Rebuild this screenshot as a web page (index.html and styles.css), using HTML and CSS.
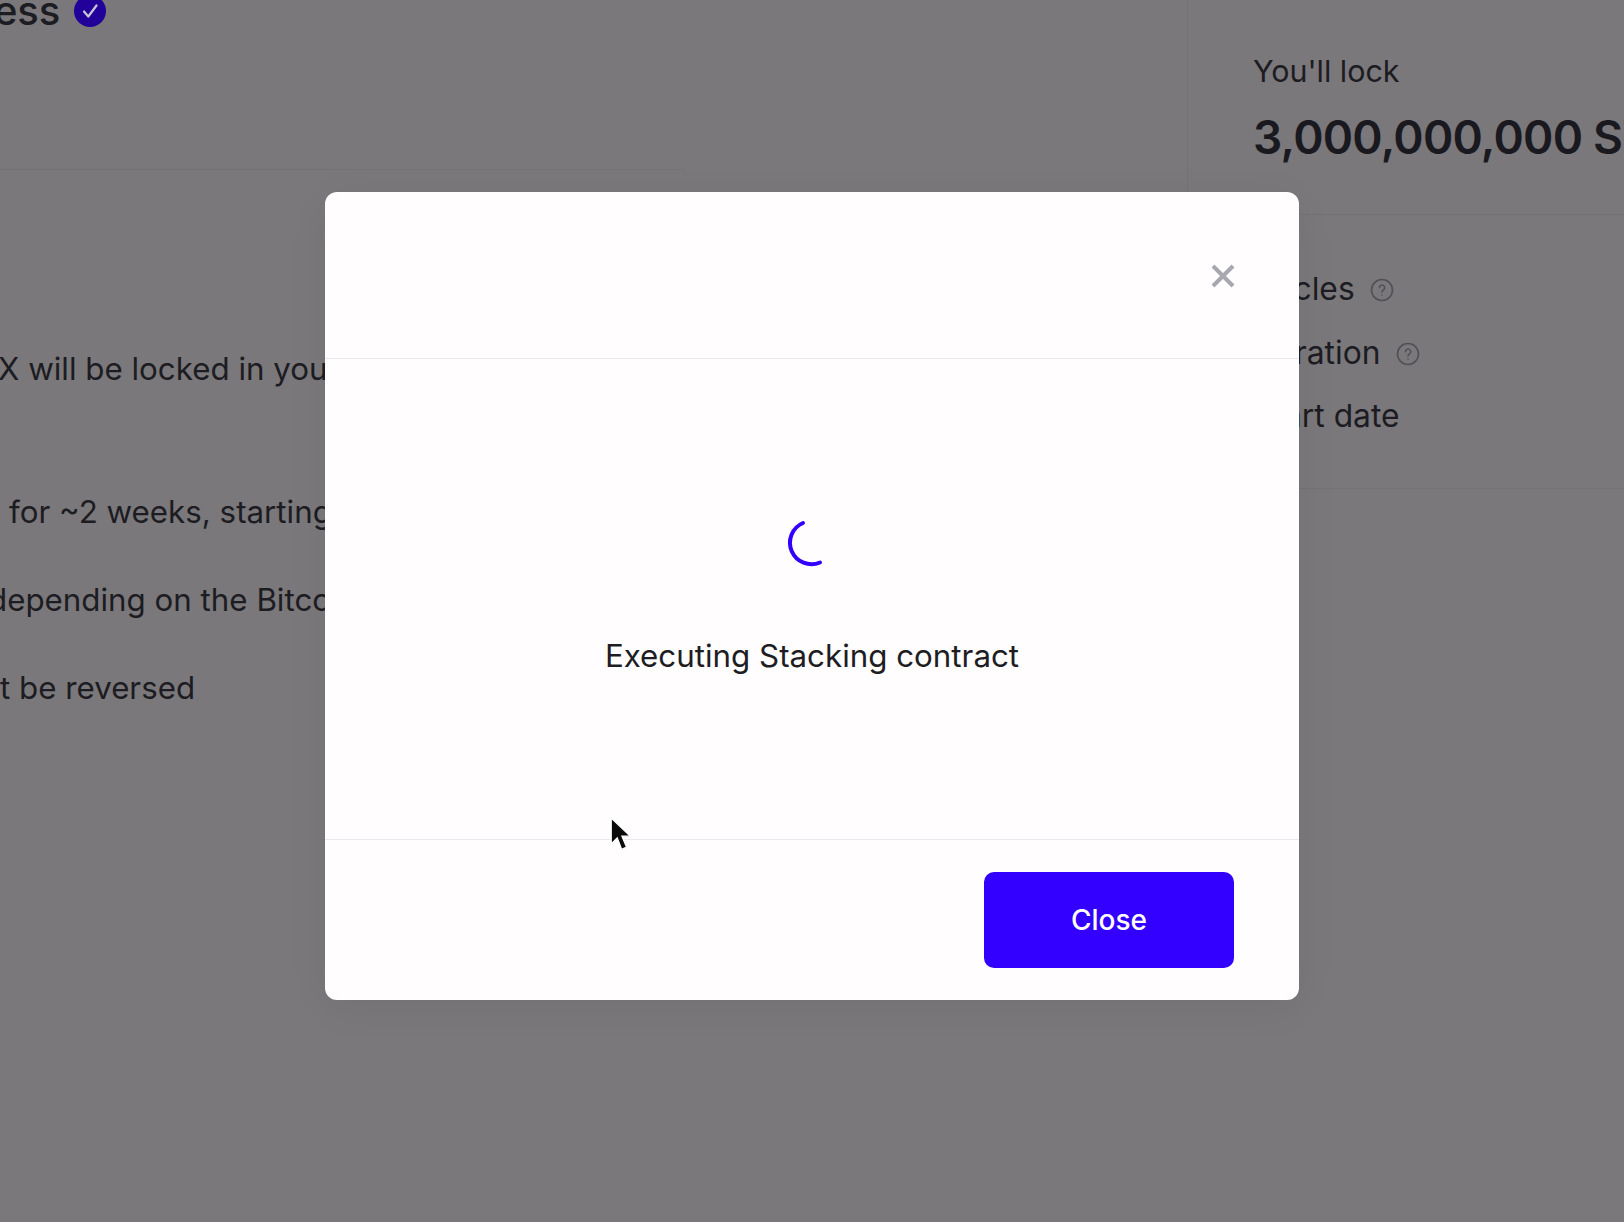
FILE: index.html
```html
<!DOCTYPE html>
<html lang="en">
<head>
<meta charset="utf-8">
<title>Executing Stacking contract</title>
<link rel="stylesheet" href="styles.css">
</head>
<body>
<div class="page">
  <main class="left">
    <div class="heading">
      <h1 class="title">ess</h1>
      <svg class="verified" viewBox="0 0 32 32" aria-hidden="true"><circle cx="16" cy="16" r="16" fill="#22009a"/><path d="M10 16.500l4.300 5L22.500 10.500" fill="none" stroke="#c9c7d6" stroke-width="2.200" stroke-linecap="round" stroke-linejoin="round"/></svg>
    </div>
    <ul class="notes">
      <li class="note note-first">X will be locked in your wallet</li>
      <li class="note note-second">for ~2 weeks, starting soon</li>
      <li class="note note-third">depending on the Bitcoin</li>
      <li class="note">t be reversed</li>
    </ul>
  </main>
  <aside class="right">
    <section class="lock">
      <div class="lock-label">You'll lock</div>
      <div class="lock-value">3,000,000,000 STX</div>
    </section>
    <section class="facts">
      <div class="fact">Cycles <svg class="help" viewBox="0 0 24 24" aria-hidden="true"><circle cx="12" cy="12" r="10.500"/><path d="M9.500 9.600a2.600 2.600 0 1 1 4 2.200c-.9.600-1.500 1.100-1.500 2.200"/><circle class="dot" cx="12" cy="17" r="0.800"/></svg></div>
      <div class="fact">Duration <svg class="help" viewBox="0 0 24 24" aria-hidden="true"><circle cx="12" cy="12" r="10.500"/><path d="M9.500 9.600a2.600 2.600 0 1 1 4 2.200c-.9.600-1.500 1.100-1.500 2.200"/><circle class="dot" cx="12" cy="17" r="0.800"/></svg></div>
      <div class="fact">Start date</div>
    </section>
  </aside>
  <div class="overlay">
    <div class="modal">
      <header class="modal-head">
        <button class="modal-x" aria-label="Close">
          <svg viewBox="0 0 24 24" aria-hidden="true"><path d="M2 2L22 22M22 2L2 22"/></svg>
        </button>
      </header>
      <div class="modal-body">
        <svg class="spinner" viewBox="0 0 48 48" aria-hidden="true"><path d="M16 4A21.500 21.500 0 1 0 33 43.500"/></svg>
        <p class="status">Executing Stacking contract</p>
      </div>
      <footer class="modal-foot">
        <button class="close-btn">Close</button>
      </footer>
    </div>
    <svg class="cursor" viewBox="0 0 20 32" aria-hidden="true"><path d="M2 1.500V25l5.500-5.500L11.500 30l4.500-2-4.200-10H19.500z"/></svg>
  </div>
</div>
</body>
</html>
```
FILE: styles.css
```css
* { box-sizing: border-box; }
html, body { margin: 0; padding: 0; }
body { font-family: Inter, "Liberation Sans", sans-serif; background: #7a787a; color: #1c1c22; }
.page { position: relative; width: 1624px; height: 1222px; overflow: hidden; display: flex; background: #7a787a; }
.left { width: 1187px; flex: none; }
.heading { display: flex; align-items: center; gap: 14px; padding-bottom: 140px; margin-top: -7px; height: 177px; border-bottom: 1px solid #747274; width: 685px; }
.title { margin: 0 0 0 -6px; font-size: 40px; line-height: 40px; font-weight: 500; letter-spacing: -0.2px; }
.verified { width: 32px; height: 32px; flex: none; }
.notes { list-style: none; margin: 0; padding: 0; }
.note { font-size: 31.300px; line-height: 40px; white-space: nowrap; margin-bottom: 47.500px; }
.note-first { margin-top: 179px; margin-bottom: 103px; margin-left: -2px; }
.note-second { margin-left: 9px; }
.note-third { margin-left: -12px; margin-bottom: 48.500px; }
.right { flex: 1; min-width: 0; }
.lock { height: 215px; padding: 51px 0 0 65px; border-bottom: 1px solid #747274; border-left: 1px solid #747274; white-space: nowrap; }
.lock-label { font-size: 30.400px; line-height: 40px; }
.lock-value { font-size: 46px; line-height: 60px; font-weight: 600; letter-spacing: -0.750px; margin-top: 16px; color: #19191f; }
.facts { height: 274px; padding: 42.500px 0 0 66px; border-bottom: 1px solid #747274; }
.fact { display: flex; align-items: center; gap: 15px; font-size: 31.800px; line-height: 40px; height: 63.500px; white-space: nowrap; }
.help { width: 24px; height: 24px; margin-top: 2px; fill: none; stroke: #505058; stroke-width: 1.600; stroke-linecap: round; }
.help .dot { fill: #505058; stroke: none; }
.overlay { position: absolute; inset: 0; display: flex; justify-content: center; align-items: flex-start; padding-top: 192px; }
.modal { width: 974px; height: 808px; background: #fffdfe; border-radius: 12px; box-shadow: 0 8px 40px rgba(0, 0, 0, 0.06); display: flex; flex-direction: column; }
.modal-head { height: 167px; flex: none; border-bottom: 1px solid #e8e8ee; display: flex; justify-content: flex-end; padding: 72px 64px 0 0; }
.modal-x { width: 24px; height: 24px; padding: 0; border: 0; background: none; }
.modal-x svg { display: block; width: 24px; height: 24px; fill: none; stroke: #a7a7af; stroke-width: 4; overflow: visible; }
.modal-body { flex: 1; display: flex; flex-direction: column; align-items: center; padding-top: 160px; border-bottom: 1px solid #e8e8ee; }
.spinner { display: block; width: 48px; height: 48px; margin-right: 3px; fill: none; stroke: #3300ff; stroke-width: 4; stroke-linecap: round; overflow: visible; }
.status { margin: 69px 0 0; font-size: 31.300px; line-height: 40px; color: #1d1d23; }
.modal-foot { height: 160px; flex: none; display: flex; justify-content: flex-end; padding: 32px 65px 0 0; }
.close-btn { width: 250px; height: 96px; border: 0; border-radius: 10px; background: #3300ff; color: #fff; font-family: inherit; font-size: 28px; font-weight: 500; }
.cursor { position: absolute; left: 609px; top: 816px; width: 22px; height: 36px; fill: #0a0a0a; stroke: #fff; stroke-width: 1.200; }
```
